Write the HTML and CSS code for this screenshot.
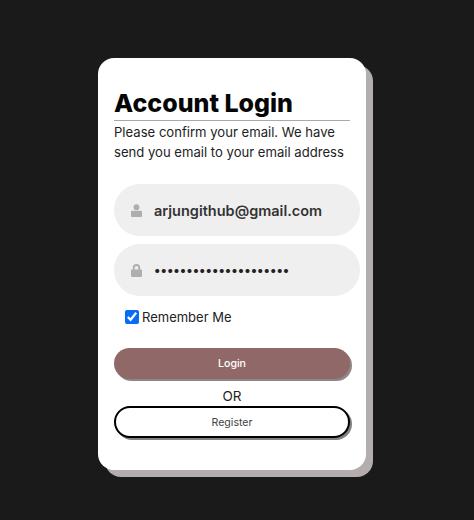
FILE: index.html
```html
<!DOCTYPE html>
<html lang="en">
<head>
<meta charset="utf-8">
<title>Account Login</title>
<link rel="stylesheet" href="styles.css">
</head>
<body>
<main class="card">
  <h1 class="title">Account Login</h1>
  <p class="intro">Please confirm your email. We have send you email to your email address</p>
  <form class="form">
    <label class="field">
      <svg class="icon" viewBox="0 0 12 14" aria-hidden="true"><circle cx="6" cy="3.4" r="3.2"/><path d="M1.2 7.4h9.6c.7 0 1.2.5 1.2 1.2V13c0 .6-.4 1-1 1H1c-.6 0-1-.4-1-1V8.600c0-.7.5-1.200 1.200-1.200z"/></svg>
      <input class="input" type="text" value="arjungithub@gmail.com">
    </label>
    <label class="field">
      <svg class="icon" viewBox="0 0 12 14" aria-hidden="true"><path fill-rule="evenodd" d="M6 0a4 4 0 0 1 4 4v2h.8c.7 0 1.200.5 1.200 1.200V13c0 .6-.4 1-1 1H1c-.6 0-1-.4-1-1V7.200C0 6.500.5 6 1.200 6H2V4a4 4 0 0 1 4-4zm0 2a2 2 0 0 0-2 2v2h4V4a2 2 0 0 0-2-2z"/></svg>
      <input class="input input-password" type="password" value="arjungithubpassword12">
    </label>
    <label class="remember"><input class="check" type="checkbox" checked>Remember Me</label>
    <button class="btn btn-login" type="button">Login</button>
    <div class="or">OR</div>
    <button class="btn btn-register" type="button">Register</button>
  </form>
</main>
</body>
</html>
```
FILE: styles.css
```css
* { box-sizing: border-box; }
html, body { margin: 0; height: 100%; }
body {
  background: #1a1a1a;
  font-family: "Inter", "Liberation Sans", sans-serif;
  color: #111;
  padding: 58px 0 0 98px;
}
.card {
  width: 268px;
  height: 412px;
  background: #fff;
  border-radius: 16px;
  box-shadow: 7px 7px 0 #b3adad;
  padding: 30px 0 0 16px;
}
.title {
  margin: 0;
  width: 236px;
  height: 33px;
  font-size: 25px;
  line-height: 30px;
  font-weight: 800;
  color: #050505;
  border-bottom: 1px solid #a9a9a9;
}
.intro {
  margin: 0;
  width: 236px;
  font-size: 13.1px;
  line-height: 20px;
  color: #222;
  padding-top: 1px;
}
.form { display: flex; flex-direction: column; align-items: flex-start; margin-top: 22px; }
.field {
  width: 246px;
  height: 52px;
  margin-bottom: 8px;
  border-radius: 26px;
  background: #efefef;
  display: flex;
  align-items: center;
  padding-left: 17px;
  gap: 12px;
}
.icon { width: 11px; height: 13px; fill: #aeaeae; flex: none; }
.input {
  border: 0;
  background: none;
  outline: 0;
  padding: 1px 0 0;
  width: 190px;
  font: 600 14.5px "Inter", "Liberation Sans", sans-serif;
  color: #333;
}
.input-password { font-size: 12.8px; color: #222; letter-spacing: 0; }
.remember {
  display: flex;
  align-items: center;
  gap: 3px;
  font-size: 13px;
  color: #222;
  height: 26px;
  margin-left: 11px;
}
.check { width: 14px; height: 14px; margin: 0; accent-color: #0a6cf5; }
.btn {
  width: 236px;
  height: 32px;
  border-radius: 16px;
  font: 500 10.6px "Inter", "Liberation Sans", sans-serif;
  padding: 0;
}
.btn-login {
  height: 31px;
  margin-top: 18px;
  background: #916868;
  color: #fff;
  border: 0;
  box-shadow: 2px 2px 0 #8f8787;
}
.or { width: 236px; text-align: center; font-size: 13.5px; line-height: 18px; margin: 8px 0 1px; color: #222; }
.btn-register {
  background: #fff;
  color: #444;
  border: 2px solid #000;
  font-weight: 400;
  box-shadow: 2px 2px 0 #808080;
}
```
